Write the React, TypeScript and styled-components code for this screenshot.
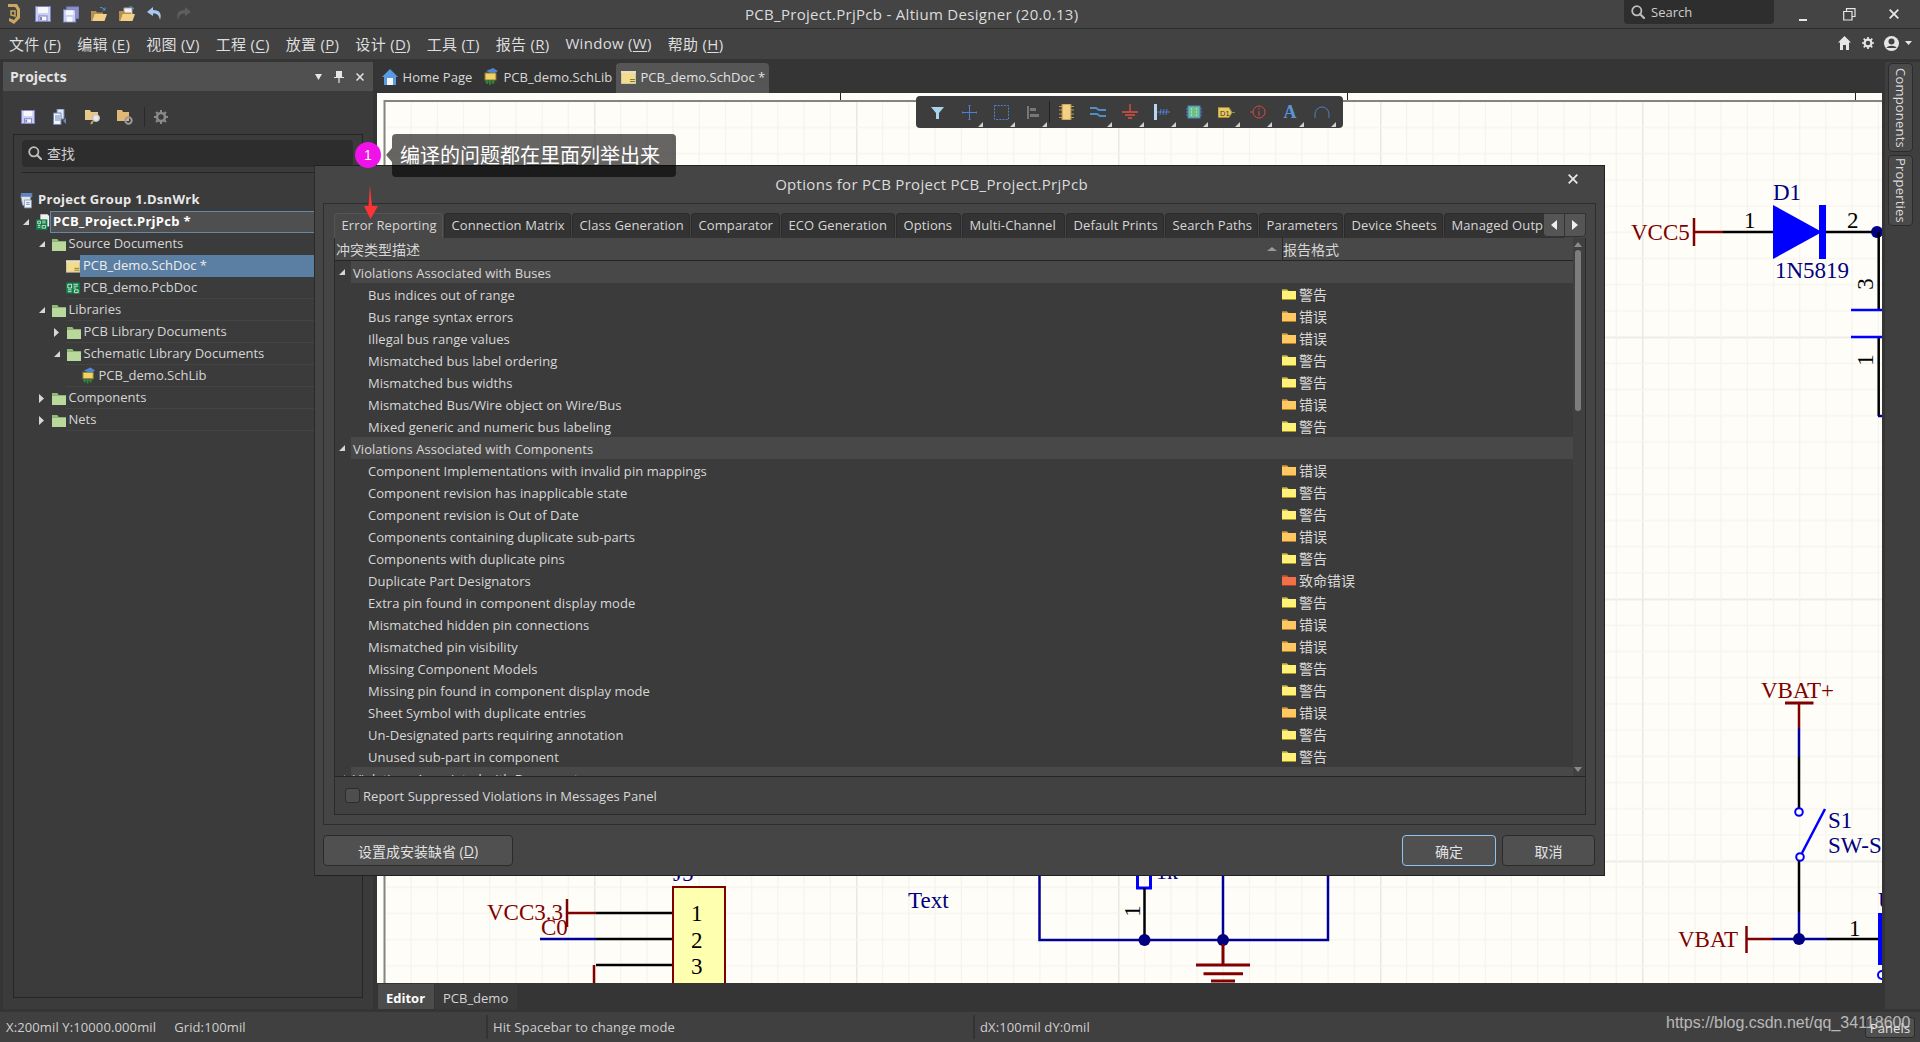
import React from "react";
import styled, { createGlobalStyle } from "styled-components";

const UI = `"Open Sans", "Noto Sans CJK SC", sans-serif`;

const GlobalStyle = createGlobalStyle`
  html, body { margin: 0; padding: 0; width: 1920px; height: 1042px; overflow: hidden; background: #353535; }
  body { font-family: ${UI}; font-size: 13px; color: #d9d9d9; }
  * { box-sizing: border-box; }
`;

const Page = styled.div`
  position: relative; width: 1920px; height: 1042px; display: flex; flex-direction: column; overflow: hidden; background: #353535;
`;
const TitleBar = styled.header`
  height: 29px; flex: none; display: flex; align-items: flex-start; background: #444; border-bottom: 1px solid #2d2d2d;
`;
const QuickBar = styled.div`
  width: 745px; height: 28px; flex: none; display: flex; align-items: center; padding-left: 7px; gap: 12px;
`;
const LogoSlot = styled.span`display: flex; width: 16px; height: 22px;`;
const AppTitle = styled.div`
  font-size: 15px; line-height: 28px; color: #dcdcdc; white-space: nowrap; letter-spacing: 0.3px;
`;
const TopSearch = styled.div`
  margin-left: auto; width: 150px; height: 24px; display: flex; align-items: center; gap: 6px; padding-left: 7px; background: #2e2e2e; border-radius: 0 0 4px 4px; font-size: 13px; color: #cfcfcf;
`;
const WinControls = styled.div`
  width: 146px; height: 28px; flex: none; display: flex; align-items: center; padding-left: 25px; gap: 30px;
`;
const MaxGlyph = styled.svg`margin-left: 6px;`;
const CloseGlyph = styled.span`display: flex; margin-left: 3px;`;
const MenuBar = styled.nav`
  height: 30px; flex: none; display: flex; align-items: center; padding: 0 8.5px 2px 9px; gap: 16px; background: #424242;
`;
const MenuItem = styled.span`
  font-size: 15px; color: #dedede; white-space: nowrap; letter-spacing: 0.3px;
  u { text-underline-offset: 2px; }
`;
const MenuTools = styled.div`margin-left: auto; display: flex; align-items: center; gap: 10.5px;`;
const Caret = styled.svg`margin-left: -5px;`;
const Main = styled.main`flex: 1; min-height: 0; display: flex; align-items: stretch;`;

const LeftPanel = styled.aside`
  width: 370px; margin: 3px 0 3px 3px; flex: none; display: flex; flex-direction: column; background: #3b3b3b;
`;
const PanelHead = styled.div`
  height: 29px; flex: none; display: flex; align-items: center; background: #505050; padding: 0 9px 0 7px;
`;
const PanelTitle = styled.b`font-size: 14px; color: #e4e4e4; font-weight: 700; flex: 1;`;
const PanelHeadTools = styled.div`display: flex; align-items: center; gap: 12px;`;
const PanelTools = styled.div`
  height: 43px; flex: none; display: flex; align-items: center; padding: 9px 0 0 18px;
`;
const ToolIcon = styled.span`display: flex; width: 32px; justify-content: flex-start;`;
const ToolSep = styled.span`width: 1px; height: 20px; background: #2a2a2a; margin: 0 9px 0 -5px;`;
const TreeBox = styled.div`
  flex: 1; margin: 0 10px 11px; border: 1px solid #252525; display: flex; flex-direction: column; position: relative;
`;
const FindBox = styled.div`
  height: 27px; margin: 5px 9px 5px 8px; flex: none; display: flex; align-items: center; gap: 5px; padding: 0 0 2px 6px; background: #2d2d2d; border-radius: 4px; font-size: 14px; color: #cfcfcf;
`;
const FindRule = styled.div`height: 1px; margin: 0 9px 16px 8px; background: #252525;`;
const TreeRow = styled.div<{ $icon: number; $line?: boolean }>`
  position: relative; height: 22px; flex: none; display: flex; align-items: center; padding-left: ${(p) => p.$icon - 14}px;
  ${(p) => p.$line && `&::after { content: ""; position: absolute; left: 52px; right: 0; bottom: 0; height: 1px; background: #444; }`}
`;
const ArrowSlot = styled.span`width: 10px; margin: 0 3px 0 -13px; flex: none; display: flex; align-items: center;`;
const IconSlot = styled.span`width: 14px; height: 16px; flex: none; display: flex; align-items: center;`;
const TreeLabel = styled.span<{ $kind?: "sel" | "focus" | "bold" }>`
  flex: 1; height: 22px; line-height: 21px; padding-left: 3px; white-space: nowrap; font-size: 13px; color: #d6d6d6;
  ${(p) => p.$kind === "sel" && `background: #5b7ea3; color: #eee;`}
  ${(p) => p.$kind === "bold" && `font-weight: 700; color: #e8e8e8; letter-spacing: 0.3px; padding-left: 4px;`}
  ${(p) => p.$kind === "focus" && `font-weight: 700; color: #fff; background: #4f4f4f; border: 1px solid #6388a8; border-right: 0; padding-left: 2px; line-height: 19px; letter-spacing: 0.3px;`}
`;

const Center = styled.section`width: 1505px; margin-left: 4px; flex: none; display: flex; flex-direction: column;`;
const DocTabs = styled.div`height: 34px; flex: none; display: flex; align-items: flex-end;`;
const DocTab = styled.div<{ $active?: boolean; $w: number }>`
  width: ${(p) => p.$w}px; height: 30px; flex: none; display: flex; align-items: center; gap: 4.5px; padding: 0 0 2px 5px; font-size: 13px; white-space: nowrap; color: #d8d8d8; letter-spacing: 0.05px;
  ${(p) => p.$active && `background: #555; border-radius: 4px 4px 0 0; color: #e2e2e2;`}
`;
const Canvas = styled.div`position: relative; flex: 1; min-height: 0; overflow: hidden; background: #fff;`;
const Sheet = styled.svg`display: block; width: 1505px; height: 891px;`;
const FloatBar = styled.div`
  position: absolute; left: 539px; top: 3px; width: 427px; height: 32px; display: flex; align-items: center; padding-left: 5px; background: #3d3d3d; border-radius: 4px;
`;
const FloatSlot = styled.span<{ $more?: boolean }>`
  position: relative; width: 32px; height: 32px; flex: none; display: flex; align-items: center; justify-content: center;
  ${(p) => p.$more && `&::after { content: ""; position: absolute; right: 2px; bottom: 1px; border-style: solid; border-width: 0 0 5px 5px; border-color: transparent transparent #cfcfcf transparent; }`}
`;
const FloatSep = styled.span`width: 1px; height: 22px; background: #222; flex: none; margin-left: 0;`;
const EditorTabs = styled.div`height: 25px; margin: 1px 0 3px; flex: none; display: flex;`;
const EditorTab = styled.div<{ $active?: boolean; $w: number }>`
  width: ${(p) => p.$w}px; margin-left: 1px; display: flex; align-items: center; padding: 2px 0 0 8px; font-size: 13px;
  background: ${(p) => (p.$active ? "#4c4c4c" : "#3a3a3a")}; color: ${(p) => (p.$active ? "#fff" : "#d4d4d4")}; font-weight: ${(p) => (p.$active ? 700 : 400)};
`;

const RightStrip = styled.aside`
  width: 35px; margin: 3px 0 3px 3px; flex: none; background: #3f3f3f; display: flex; flex-direction: column; gap: 3px; padding: 1px 0 0 3px;
`;
const SideTab = styled.div<{ $h: number }>`
  width: 25px; height: ${(p) => p.$h}px; writing-mode: vertical-rl; display: flex; align-items: center; justify-content: center; background: #4a4a4a; border: 1px solid #2c2c2c; border-radius: 4px; font-size: 13px; letter-spacing: 0.2px; color: #dcdcdc;
`;

const StatusBar = styled.footer`
  height: 30px; flex: none; display: flex; align-items: center; background: #404040; font-size: 13px; color: #cfcfcf; letter-spacing: 0.12px; position: relative;
`;
const StatusCell = styled.div<{ $w: number; $sep?: boolean }>`
  width: ${(p) => p.$w}px; height: 24px; flex: none; display: flex; align-items: center; padding-left: ${(p) => (p.$sep ? 5 : 6)}px; gap: 18px; white-space: nowrap;
  ${(p) => p.$sep && `border-left: 2px solid #333;`}
`;
const PanelsButton = styled.div`
  position: absolute; right: 5px; top: 5px; width: 50px; height: 21px; display: flex; align-items: center; justify-content: center; background: #505050; border: 1px solid #2c2c2c; border-radius: 3px; font-size: 13px; color: #e2e2e2;
`;
const Watermark = styled.div`
  position: absolute; left: 1666px; top: 1012px; font-family: "Liberation Sans", sans-serif; font-size: 16px; line-height: 22px; color: rgba(225,225,225,.75); white-space: nowrap; z-index: 5;
`;

/* dialog */
const Dialog = styled.div`
  position: absolute; left: 314px; top: 165px; width: 1291px; height: 711px; z-index: 2; display: flex; flex-direction: column; background: #454545; border: 1px solid #222; border-left-color: #2a2a2a;
`;
const DialogHead = styled.div`
  position: relative; height: 37px; flex: none; display: flex; align-items: center; justify-content: center; padding: 0 56px 2px 0; font-size: 15px; color: #dcdcdc; letter-spacing: 0.3px;
`;
const DialogClose = styled.span`position: absolute; right: 26px; top: 8px; display: flex;`;
const DialogBody = styled.div`
  height: 622px; margin: 0 8px 0 8px; flex: none; border: 1px solid #2e2e2e; padding: 9px 9px 9px 10px; display: flex; flex-direction: column;
`;
const TabRow = styled.div`position: relative; height: 25px; flex: none; display: flex; gap: 1px; overflow: hidden;`;
const Tab = styled.div<{ $active?: boolean; $w: number }>`
  width: ${(p) => p.$w}px; height: 25px; flex: none; display: flex; align-items: center; padding: 0 0 2px 6.5px; white-space: nowrap; overflow: hidden; border-radius: 4px 4px 0 0; font-size: 13px; color: #d6d6d6; letter-spacing: 0.1px;
  background: ${(p) => (p.$active ? "#484848" : "#333")};
  border: 1px solid ${(p) => (p.$active ? "#555" : "#2b2b2b")}; border-bottom: 0;
`;
const TabScroll = styled.div`
  position: absolute; right: 0; top: 0; width: 43px; height: 24px; display: flex; background: #555; border-radius: 0 0 4px 4px; border: 1px solid #333;
`;
const TabScrollBtn = styled.span<{ $rule?: boolean }>`
  flex: 1; display: flex; align-items: center; justify-content: center;
  ${(p) => p.$rule && `border-left: 1px solid #333;`}
`;
const TableBox = styled.div`
  flex: 1; min-height: 0; display: flex; flex-direction: column; border: 1px solid #2b2b2b; border-top: 0; background: #3b3b3b;
`;
const TableArea = styled.div`height: 539px; flex: none; display: flex; border-bottom: 1px solid #252525;`;
const TableMain = styled.div`width: 1238px; flex: none; display: flex; flex-direction: column; min-height: 0;`;
const HeadRow = styled.div`
  height: 23px; flex: none; display: grid; grid-template-columns: 947px 1fr; align-items: center; background: #484848; border-bottom: 1px solid #252525; font-size: 14px; color: #d6d6d6;
`;
const HeadCell = styled.div<{ $rule?: boolean }>`
  position: relative; height: 22px; line-height: 23px; padding-left: ${(p) => (p.$rule ? 0 : 1)}px;
  ${(p) => p.$rule && `border-left: 1px solid #2a2a2a;`}
`;
const SortMark = styled.span`
  position: absolute; right: 5px; top: 9px; border-style: solid; border-width: 0 5px 4px 5px; border-color: transparent transparent #9a9a9a transparent;
`;
const RowScroll = styled.div`flex: 1; min-height: 0; overflow: hidden;`;
const GroupRow = styled.div`height: 22px; display: flex; align-items: center; padding-left: 16px;`;
const GroupTri = styled.span`
  position: relative; left: -12px; width: 0; height: 0; border-style: solid; border-width: 0 0 6px 6px; border-color: transparent transparent #d5d5d5 transparent; margin-right: -6px;
`;
const GroupLabel = styled.div`
  flex: 1; height: 22px; line-height: 24px; padding-left: 2px; background: #484848; font-size: 13px; color: #d8d8d8; letter-spacing: 0.05px;
`;
const DataRow = styled.div`
  height: 22px; display: grid; grid-template-columns: 947px 1fr; align-items: center; font-size: 13px; color: #d8d8d8; letter-spacing: 0.05px;
`;
const NameCell = styled.div`padding: 1px 0 0 33px; white-space: nowrap;`;
const StatusTag = styled.div`display: flex; align-items: center; gap: 3px; font-size: 14px; letter-spacing: 0;`;
const ScrollCol = styled.div`
  flex: 1; position: relative; display: flex; flex-direction: column; align-items: center; padding: 4px 2px 0 0; background: #404040;
`;
const ScrollUp = styled.span`
  width: 0; height: 0; border-style: solid; border-width: 0 4px 5px 4px; border-color: transparent transparent #8a8a8a transparent;
`;
const ScrollThumb = styled.span`width: 6px; height: 161px; margin-top: 3px; background: #7d7d7d; border-radius: 3px;`;
const ScrollDown = styled.span`
  margin-top: auto; margin-bottom: 4px; width: 0; height: 0; border-style: solid; border-width: 5px 4px 0 4px; border-color: #8a8a8a transparent transparent transparent;
`;
const OptionRow = styled.div`flex: 1; display: flex; align-items: center; padding-left: 10px; gap: 3px; background: #414141; font-size: 13px; color: #d8d8d8; letter-spacing: 0.03px;`;
const Check = styled.span`width: 15px; height: 15px; background: #4e4e4e; border: 1px solid #2d2d2d; border-radius: 3px;`;
const DialogFoot = styled.div`flex: 1; display: flex; align-items: flex-start; padding: 10px 9px 0 8px; gap: 6px;`;
const Btn = styled.div<{ $w: number; $primary?: boolean; $push?: boolean }>`
  width: ${(p) => p.$w}px; height: 31px; display: flex; align-items: center; justify-content: center; background: #505050; border-radius: 4px; border: 1px solid ${(p) => (p.$primary ? "#8fc3f2" : "#2b2b2b")}; font-size: 14px; color: #e2e2e2;
  ${(p) => p.$push && `margin-left: auto;`}
`;

/* annotation */
const Badge = styled.div`
  position: absolute; left: 355px; top: 142px; width: 26px; height: 26px; border-radius: 50%; background: #f012e8; z-index: 4; display: flex; align-items: center; justify-content: center; font-family: "Liberation Sans", sans-serif; font-size: 14px; color: #fff;
`;
const Callout = styled.div`
  position: absolute; left: 392px; top: 134px; width: 284px; height: 43px; z-index: 3; padding-left: 8px; background: rgba(0,0,0,.6); border-radius: 4px; font-size: 20px; line-height: 42px; color: #fff; white-space: nowrap; font-family: "Noto Sans CJK SC", sans-serif;
  &::before { content: ""; position: absolute; left: -6px; top: 14px; border-style: solid; border-width: 7px 6px 7px 0; border-color: transparent rgba(0,0,0,.6) transparent transparent; }
`;
const RedArrow = styled.svg`position: absolute; left: 360px; top: 183px; width: 22px; height: 38px; z-index: 4;`;

/* ---------- icons ---------- */
const Folder = ({ c, d, w = 14 }: { c: string; d: string; w?: number }) => (
  <svg width={w} height={12} viewBox="0 0 14 12">
    <path d="M0 1.5 H5 L6.5 3 H14 V12 H0 Z" fill={c} />
    <path d="M0 11 H14 V12 H0 Z" fill={d} />
    <path d="M0 1.5 H5 L6.5 3 H0 Z" fill={d} opacity=".6" />
  </svg>
);
const TreeFolder = () => (
  <svg width={14} height={13} viewBox="0 0 14 13">
    <path d="M0 1 H5 L6.5 3 H14 V13 H0 Z" fill="#b9d99c" />
    <path d="M0 3 H14 V4 H0 Z" fill="#8cb274" />
    <path d="M0 1 H5 L6.5 3 H0 Z" fill="#93bb78" />
  </svg>
);
const SchIcon = () => (
  <svg width={15} height={13} viewBox="0 0 15 13">
    <rect x=".5" y=".5" width="14" height="12" fill="#f5dc8c" stroke="#c9c9b0" />
    <path d="M0 0 H15 V2 H0 Z" fill="#e6e0c8" />
    <path d="M9 8.5 H14 M9 10.5 H14" stroke="#8a7a30" />
  </svg>
);
const PcbIcon = ({ w = 15 }: { w?: number }) => (
  <svg width={w} height={14} viewBox="0 0 15 14">
    <rect x="0" y="1" width="15" height="12" fill="#0f7a48" />
    <path d="M2 3 H6 V7 H2 Z M8 3 H13 M8 5 H13 M8 7 H11 M2 9 H6 M2 11 H6 M9 9 H13 V12 H9 Z" stroke="#d8f0d8" strokeWidth="1" fill="none" />
  </svg>
);
const PrjIcon = () => (
  <svg width={16} height={18} viewBox="0 0 16 18">
    <path d="M5 0 H13 L15 2 V14 H5 Z" fill="#f0f0f0" />
    <rect x="0" y="6" width="13" height="12" fill="#0f7a48" />
    <path d="M2 8 H5 V11 H2 Z M7 8 H11 M7 10 H11 M2 13 H5 M2 15 H5 M7 13 H11 V16 H7 Z" stroke="#d8f0d8" fill="none" />
  </svg>
);
const GroupIcon = () => (
  <svg width={16} height={18} viewBox="0 0 16 18">
    <path d="M1 1 H14 V6 H1 Z" fill="#5f84c2" />
    <path d="M1 5 H12 V15 H3 Z" fill="#e6e6e6" stroke="#7f95b8" />
    <path d="M5 9 H13 V18 H5 Z" fill="#f5f5f5" stroke="#7f95b8" />
    <path d="M7 12 H11 M7 14 H11" stroke="#5f84c2" />
  </svg>
);
const LibIcon = () => (
  <svg width={15} height={18} viewBox="0 0 15 18">
    <path d="M2 3 L9 0 L14 3 L9 6 Z" fill="#4d86d6" />
    <rect x="1" y="5" width="11" height="7" fill="#f0d268" stroke="#8a7a30" />
    <path d="M3 12 V16 M6 12 V17 M9 12 V16" stroke="#2f8a3c" strokeWidth="1.5" />
    <path d="M1 14 H11" stroke="#2f8a3c" />
  </svg>
);
const Tri = ({ open }: { open?: boolean }) =>
  open ? (
    <svg width={6} height={6} viewBox="0 0 6 6"><path d="M6 0 V6 H0 Z" fill="#d8d8d8" /></svg>
  ) : (
    <svg width={5} height={9} viewBox="0 0 5 9"><path d="M0 0 L5 4.5 L0 9 Z" fill="#d8d8d8" /></svg>
  );
const Disk = ({ s = 16 }: { s?: number }) => (
  <svg width={s} height={s} viewBox="0 0 16 16">
    <rect x=".5" y=".5" width="15" height="15" fill="#c9d1f2" stroke="#7f80c4" />
    <rect x="3" y="1" width="10" height="6" fill="#f6f6fb" />
    <rect x="4" y="10" width="8" height="5" fill="#f6f6fb" stroke="#7f80c4" />
    <rect x="5" y="11" width="2" height="3" fill="#7f80c4" />
  </svg>
);
const DiskAll = () => (
  <svg width={16} height={17} viewBox="0 0 17 17">
    <rect x="4" y=".5" width="12.5" height="12" fill="#8f92c8" stroke="#7f80c4" />
    <rect x=".5" y="3.5" width="13" height="13" fill="#c9d1f2" stroke="#7f80c4" />
    <rect x="3" y="4" width="8" height="5" fill="#f6f6fb" />
    <rect x="4" y="11" width="6" height="5" fill="#f6f6fb" />
  </svg>
);
const OpenFolder = ({ doc }: { doc?: boolean }) => (
  <svg width={16} height={16} viewBox="0 0 16 16">
    {doc && <path d="M5 2 H13 V9 H5 Z" fill="#f2f2f2" stroke="#aaa" />}
    <path d="M0 5 H5 L6 6.5 H12 V8 H3.5 L1 15 H0 Z" fill="#b88f4f" />
    <path d="M3.5 8 H16 L13.5 15 H1 Z" fill="#f3cf88" />
    {!doc && <path d="M9 1.5 A5 5 0 0 1 14 4 M14 4 L11.5 4 M14 4 L14 1.5" stroke="#5a8fc8" fill="none" />}
    {doc && <path d="M10 1 A4 4 0 0 1 15 3" stroke="#5a8fc8" fill="none" />}
  </svg>
);
const Undo = ({ on }: { on?: boolean }) => (
  <svg width={16} height={14} viewBox="0 0 16 14">
    <path d={on ? "M6 0 L0 5 L6 9 V6.5 C10 6 12 8 13 13 C15 7 13 3 6 3 Z" : "M10 0 L16 5 L10 9 V6.5 C6 6 4 8 3 13 C1 7 3 3 10 3 Z"} fill={on ? "#a9c8f0" : "#5e5e5e"} />
  </svg>
);
const Logo = () => (
  <svg width={14} height={22} viewBox="0 0 14 22">
    <path d="M1 1 L10 1 L13 6 V15 L7 21 L2 18 V15 L7 17 L10 13 V7 L8 4 L1 4 Z" fill="#c8a860" />
    <path d="M4 8 L8 8 V13 L4 12 Z" fill="none" stroke="#c8a860" strokeWidth="1.5" />
  </svg>
);
const Search = ({ s = 13, c = "#bdbdbd" }: { s?: number; c?: string }) => (
  <svg width={s} height={s} viewBox="0 0 14 14">
    <circle cx="5.8" cy="5.8" r="4.6" fill="none" stroke={c} strokeWidth="1.8" />
    <path d="M9 9 L13 13" stroke={c} strokeWidth="2.2" strokeLinecap="round" />
  </svg>
);
const Gear = ({ c = "#8a8a8a", s = 14 }: { c?: string; s?: number }) => (
  <svg width={s} height={s} viewBox="0 0 14 14">
    <circle cx="7" cy="7" r="4" fill="none" stroke={c} strokeWidth="2.6" />
    <path d="M7 0 V2.5 M7 11.5 V14 M0 7 H2.5 M11.5 7 H14 M2 2 L3.8 3.8 M10.2 10.2 L12 12 M12 2 L10.2 3.8 M3.8 10.2 L2 12" stroke={c} strokeWidth="2" />
  </svg>
);
const Close = ({ s = 10, w = 1.8 }: { s?: number; w?: number }) => (
  <svg width={s} height={s} viewBox="0 0 10 10"><path d="M.7 .7 L9.3 9.3 M9.3 .7 L.7 9.3" stroke="#e6e6e6" strokeWidth={w} /></svg>
);
const Home = () => (
  <svg width={16} height={16} viewBox="0 0 16 16">
    <path d="M8 0 L16 8 L14 8 V16 H2 V8 H0 Z" fill="#5a9ae0" />
    <path d="M5 9 H11 V16 H5 Z" fill="#f4f4f4" />
  </svg>
);

const Flt = () => (<svg width="15" height="15" viewBox="0 0 15 15"><path d="M1 2 H14 L9 8 V14 H6 V8 Z" fill="#a9d4ee" /></svg>);
const Cross = () => (<svg width="15" height="15" viewBox="0 0 15 15"><path d="M7.5 0 V15 M0 7.5 H15" stroke="#4f7fd6" /><path d="M6 0 H9 M6 15 H9 M0 6 V9 M15 6 V9" stroke="#4f7fd6" /></svg>);
const Dash = () => (<svg width="15" height="15" viewBox="0 0 15 15"><rect x=".5" y=".5" width="14" height="14" fill="none" stroke="#4f7fd6" strokeDasharray="2 1.2" /></svg>);
const Align = () => (<svg width="13" height="13" viewBox="0 0 13 13"><path d="M0 0 H2 V13 H0 Z" fill="#777" /><path d="M3 2 H9 V5 H3 Z M3 8 H12 V11 H3 Z" fill="#777" /></svg>);
const Part = () => (<svg width="15" height="16" viewBox="0 0 15 16"><rect x="3" y="0" width="9" height="16" fill="#f5d080" stroke="#9a8a50" /><path d="M0 2.5 H3 M0 6 H3 M0 10 H3 M0 13.5 H3 M12 2.5 H15 M12 6 H15 M12 10 H15 M12 13.5 H15" stroke="#b89a50" /></svg>);
const Wires = () => (<svg width="16" height="12" viewBox="0 0 16 12"><path d="M0 2 H6 L9 4 H16 M0 8 H7 L10 10 H16" stroke="#4f8fc8" strokeWidth="2" fill="none" /></svg>);
const Gnd = () => (<svg width="16" height="16" viewBox="0 0 16 16"><path d="M8 0 V8 M0 8 H16 M3 11 H13 M6 14 H10" stroke="#e05040" strokeWidth="1.3" /></svg>);
const Bus = () => (<svg width="16" height="16" viewBox="0 0 16 16"><rect x="0" y="0" width="3" height="16" fill="#b9d4f5" /><path d="M3 8 H16 M7 5 L6 11 M10 5 L9 11 M13 5 L12 11" stroke="#4f7fd6" /></svg>);
const Sheetic = () => (<svg width="16" height="14" viewBox="0 0 16 14"><rect x="2" y="1" width="12" height="12" fill="#6cc08a" stroke="#4f7fd6" /><path d="M0 4 H2 M0 7 H2 M0 10 H2 M14 4 H16 M14 7 H16 M14 10 H16" stroke="#4f7fd6" /><path d="M5 4 H6 M5 7 H6 M5 10 H6 M10 4 H11 M10 7 H11 M10 10 H11" stroke="#e8f5e8" /></svg>);
const Port = () => (<svg width="17" height="11" viewBox="0 0 17 11"><path d="M0 .5 H11 L14 5.5 L11 10.5 H0 Z" fill="#e8c860" stroke="#a08a30" /><path d="M14 5.5 H17" stroke="#a08a30" /><text x="2" y="8.5" fontFamily="Liberation Sans" fontSize="7.5" fill="#333">D1</text></svg>);
const Info = () => (<svg width="16" height="14" viewBox="0 0 16 14"><circle cx="9" cy="7" r="6" fill="none" stroke="#d84a44" /><path d="M0 7 H3 M9 6 V11 M9 3 V4.5" stroke="#d84a44" /></svg>);
const ALetter = styled.span`font-family: "Liberation Serif", serif; font-weight: 700; font-size: 18px; color: #5b94d8; line-height: 1;`;
const Arc = () => (<svg width="16" height="12" viewBox="0 0 16 12"><path d="M1 12 V8 A7 7 0 0 1 15 8 V12" stroke="#4f7fc0" fill="none" /></svg>);

/* ---------- data ---------- */
const W = "警告", E = "错误", F = "致命错误";
const groups: { name: string; rows: [string, string][] }[] = [
  { name: "Violations Associated with Buses", rows: [
    ["Bus indices out of range", W], ["Bus range syntax errors", E], ["Illegal bus range values", E],
    ["Mismatched bus label ordering", W], ["Mismatched bus widths", W], ["Mismatched Bus/Wire object on Wire/Bus", E],
    ["Mixed generic and numeric bus labeling", W],
  ]},
  { name: "Violations Associated with Components", rows: [
    ["Component Implementations with invalid pin mappings", E], ["Component revision has inapplicable state", W],
    ["Component revision is Out of Date", W], ["Components containing duplicate sub-parts", E],
    ["Components with duplicate pins", W], ["Duplicate Part Designators", F], ["Extra pin found in component display mode", W],
    ["Mismatched hidden pin connections", E], ["Mismatched pin visibility", E], ["Missing Component Models", W],
    ["Missing pin found in component display mode", W], ["Sheet Symbol with duplicate entries", E],
    ["Un-Designated parts requiring annotation", W], ["Unused sub-part in component", W],
  ]},
  { name: "Violations Associated with Documents", rows: [] },
];
const tabs: [string, number][] = [
  ["Error Reporting", 109], ["Connection Matrix", 127], ["Class Generation", 118], ["Comparator", 89], ["ECO Generation", 114],
  ["Options", 65], ["Multi-Channel", 103], ["Default Prints", 98], ["Search Paths", 93], ["Parameters", 84], ["Device Sheets", 99], ["Managed Outputs", 120],
];
const menus: [string, string][] = [["文件", "F"], ["编辑", "E"], ["视图", "V"], ["工程", "C"], ["放置", "P"], ["设计", "D"], ["工具", "T"], ["报告", "R"], ["Window", "W"], ["帮助", "H"]];

const statusFolder = (s: string) =>
  s === W ? <Folder c="#fff07a" d="#a8961e" /> : s === E ? <Folder c="#ffc863" d="#b47f1e" /> : <Folder c="#f0704a" d="#a8401e" />;

type Node = { icon: number; tri?: "open" | "closed"; ic: React.ReactNode; text: string; kind?: "sel" | "focus" | "bold"; line?: boolean };
const tree: Node[] = [
  { icon: 20, ic: <GroupIcon />, text: "Project Group 1.DsnWrk", kind: "bold" },
  { icon: 36, tri: "open", ic: <PrjIcon />, text: "PCB_Project.PrjPcb *", kind: "focus" },
  { icon: 51.5, tri: "open", ic: <TreeFolder />, text: "Source Documents" },
  { icon: 66, ic: <SchIcon />, text: "PCB_demo.SchDoc *", kind: "sel" },
  { icon: 66, ic: <PcbIcon />, text: "PCB_demo.PcbDoc", line: true },
  { icon: 51.5, tri: "open", ic: <TreeFolder />, text: "Libraries", line: true },
  { icon: 66.5, tri: "closed", ic: <TreeFolder />, text: "PCB Library Documents", line: true },
  { icon: 66.5, tri: "open", ic: <TreeFolder />, text: "Schematic Library Documents", line: true },
  { icon: 81.5, ic: <LibIcon />, text: "PCB_demo.SchLib", line: true },
  { icon: 51.5, tri: "closed", ic: <TreeFolder />, text: "Components", line: true },
  { icon: 51.5, tri: "closed", ic: <TreeFolder />, text: "Nets", line: true },
];

const RED = "#800000", NAVY = "#000080", BLUE = "#0000ff", DBLUE = "#000099";
const SchText = ({ x, y, c = NAVY, s = 23, children }: { x: number; y: number; c?: string; s?: number; children: React.ReactNode }) => (
  <text x={x} y={y} fill={c} fontSize={s} fontFamily="'Liberation Serif', serif">{children}</text>
);
const PinNum = ({ x, y, children }: { x: number; y: number; children: React.ReactNode }) => (
  <text x={0} y={0} textAnchor="middle" dominantBaseline="central" fill="#000" fontSize={23} fontFamily="'Liberation Serif', serif" transform={`translate(${x} ${y}) rotate(-90)`}>{children}</text>
);
const L = ({ d, c = "#000", w = 2.5 }: { d: string; c?: string; w?: number }) => <path d={d} stroke={c} strokeWidth={w} fill="none" />;
const Dot = ({ x, y, r = 6 }: { x: number; y: number; r?: number }) => <circle cx={x} cy={y} r={r} fill={NAVY} />;

const Schematic = () => (
  <Sheet viewBox="377 93 1505 891">
    <defs>
      <pattern id="grid" patternUnits="userSpaceOnUse" x="856" y="336.6" width="262" height="262">
        <rect width="262" height="262" fill="#fffdf8" />
        {Array.from({ length: 10 }, (_, i) => (
          <React.Fragment key={i}>
            <path d={`M${i * 26.2 + 0.5} 0 V262`} stroke={i === 0 ? "#e9e8e3" : "#f5f4ef"} strokeWidth={i === 0 ? 2 : 1.2} />
            <path d={`M0 ${i * 26.2 + 0.5} H262`} stroke={i === 0 ? "#e9e8e3" : "#f5f4ef"} strokeWidth={i === 0 ? 2 : 1.2} />
          </React.Fragment>
        ))}
      </pattern>
    </defs>
    <rect x="377" y="93" width="1505" height="891" fill="#fffdf8" />
    <rect x="385" y="102" width="1497" height="882" fill="url(#grid)" />
    <path d="M384.5 984 V101 H1882" stroke="#848484" strokeWidth="2" fill="none" />
    <path d="M840.5 93 V100 M1347.5 93 V100 M1855.5 93 V100" stroke="#222" />

    <SchText x={1631} y={240} c={RED}>VCC5</SchText>
    <L d="M1694 218 V246" c={RED} />
    <L d="M1694 232 H1723" c={RED} />
    <L d="M1723 232 H1773 M1826 232 H1878" />
    <SchText x={1744} y={228} c="#000">1</SchText>
    <SchText x={1847} y={228} c="#000">2</SchText>
    <path d="M1773 205 L1822 232 L1773 259 Z" fill={BLUE} />
    <rect x="1819" y="205" width="7" height="54" fill={BLUE} />
    <SchText x={1773} y={200}>D1</SchText>
    <SchText x={1775} y={278}>1N5819</SchText>
    <Dot x={1877} y={232} />
    <L d="M1878.7 232 V310 M1878.7 337 V416" />
    <L d="M1851 310 H1882 M1851 337 H1882" c={BLUE} />
    <L d="M1878 416 H1882" c={DBLUE} />
    <PinNum x={1865} y={284}>3</PinNum>
    <PinNum x={1865} y={360}>1</PinNum>

    <SchText x={487} y={920} c={RED}>VCC3.3</SchText>
    <L d="M567 899 V927" c={RED} />
    <L d="M567 913 H596" c={RED} />
    <SchText x={541} y={935} c={RED}>C0</SchText>
    <L d="M540 939 H596" c={DBLUE} />
    <L d="M596 913 H673 M596 939 H673 M596 965 H673" />
    <L d="M594 965 V984" c={RED} />
    <rect x="673" y="887" width="52" height="110" fill="#ffffb0" stroke={RED} strokeWidth="2" />
    <SchText x={673} y={881}>J5</SchText>
    <SchText x={691} y={921} c="#000">1</SchText>
    <SchText x={691} y={948} c="#000">2</SchText>
    <SchText x={691} y={974} c="#000">3</SchText>
    <SchText x={908} y={908}>Text</SchText>

    <L d="M1039.5 860 V940 H1328 V860 M1223 860 V940" c={DBLUE} />
    <rect x="1137.5" y="860" width="13" height="28" fill="none" stroke={BLUE} strokeWidth="3" />
    <L d="M1144.5 888 V940" />
    <Dot x={1144.5} y={940} />
    <Dot x={1223} y={940} />
    <PinNum x={1132} y={911}>1</PinNum>
    <SchText x={1156} y={879} s={22}>1k</SchText>
    <L d="M1223 944 V965 M1196 965 H1250 M1203.5 973.7 H1243 M1211 981 H1235" c={RED} w={3} />

    <SchText x={1761} y={698} c={RED}>VBAT+</SchText>
    <L d="M1785 703 H1813.5" c={RED} w={3} />
    <L d="M1799 703 V728" c={RED} />
    <L d="M1799 728 V757" c={DBLUE} />
    <L d="M1799 757 V808" />
    <circle cx="1799" cy="812" r="3.8" fill="#fff" stroke={BLUE} strokeWidth="2" />
    <L d="M1802 853 L1825 809" c={BLUE} />
    <circle cx="1800" cy="857" r="3.8" fill="#fff" stroke={BLUE} strokeWidth="2" />
    <L d="M1799 861 V912" />
    <L d="M1799 912 V939" c={DBLUE} />
    <SchText x={1828} y={828}>S1</SchText>
    <SchText x={1828} y={853}>SW-SPST</SchText>
    <SchText x={1678} y={947} c={RED}>VBAT</SchText>
    <L d="M1746.5 926 V953" c={RED} />
    <L d="M1746.5 939 H1772" c={RED} />
    <L d="M1772 939 H1827" c={DBLUE} />
    <L d="M1827 939 H1878" />
    <SchText x={1849} y={936} c="#000">1</SchText>
    <Dot x={1799} y={939} />
    <rect x="1878" y="913" width="4" height="52" fill={BLUE} />
    <SchText x={1878} y={908}>U1</SchText>
    <circle cx="1882" cy="975" r="4" fill="#fff" stroke={BLUE} strokeWidth="2" />
  </Sheet>
);

export default function App() {
  return (
    <Page>
      <GlobalStyle />
      <TitleBar>
        <QuickBar>
          <LogoSlot><Logo /></LogoSlot>
          <Disk />
          <DiskAll />
          <OpenFolder />
          <OpenFolder doc />
          <Undo on />
          <Undo />
        </QuickBar>
        <AppTitle>PCB_Project.PrjPcb - Altium Designer (20.0.13)</AppTitle>
        <TopSearch><Search s={14} />Search</TopSearch>
        <WinControls>
          <svg width="8" height="20" viewBox="0 0 8 20"><path d="M0 16 H8" stroke="#e6e6e6" strokeWidth="2" /></svg>
          <MaxGlyph width="13" height="13" viewBox="0 0 13 13"><path d="M3.5 3 V.7 H12 V8.5 H9 M.7 3.5 H9 V12 H.7 Z" stroke="#e6e6e6" strokeWidth="1.2" fill="none" /></MaxGlyph>
          <CloseGlyph><Close s={10} w={1.8} /></CloseGlyph>
        </WinControls>
      </TitleBar>
      <MenuBar>
        {menus.map(([t, k]) => (
          <MenuItem key={k}>{t} (<u>{k}</u>)</MenuItem>
        ))}
        <MenuTools>
          <svg width="13" height="14" viewBox="0 0 13 14"><path d="M6.5 0 L13 6.5 H11 V14 H8 V9 H5 V14 H2 V6.5 H0 Z" fill="#e6e6e6" /></svg>
          <Gear c="#e6e6e6" s={12} />
          <svg width="15" height="15" viewBox="0 0 15 15"><circle cx="7.5" cy="7.5" r="7.5" fill="#e6e6e6" /><circle cx="7.5" cy="5.5" r="3" fill="#424242" /><path d="M2.5 12 C3.5 9 11.5 9 12.5 12 Z" fill="#424242" /></svg>
          <Caret width="7" height="4" viewBox="0 0 7 4"><path d="M0 0 H7 L3.5 4 Z" fill="#e6e6e6" /></Caret>
        </MenuTools>
      </MenuBar>
      <Main>
        <LeftPanel>
          <PanelHead>
            <PanelTitle>Projects</PanelTitle>
            <PanelHeadTools>
              <svg width="7" height="6" viewBox="0 0 7 6"><path d="M0 0 H7 L3.5 6 Z" fill="#e6e6e6" /></svg>
              <svg width="10" height="12" viewBox="0 0 10 12"><path d="M2 0 H8 V6 H10 V7 H5.6 V12 H4.4 V7 H0 V6 H2 Z" fill="#e6e6e6" /></svg>
              <Close s={8} />
            </PanelHeadTools>
          </PanelHead>
          <PanelTools>
            <ToolIcon><Disk s={14} /></ToolIcon>
            <ToolIcon>
              <svg width="14" height="16" viewBox="0 0 14 16"><path d="M4 0 H11 V10 H4 Z" fill="#dfe6f5" stroke="#6f86b8" /><path d="M.5 4 H8 V15.5 H.5 Z" fill="#f2f4fa" stroke="#6f86b8" /><path d="M2 7 H7 M2 9 H7 M2 11 H7" stroke="#6f86b8" /><path d="M10 12 L13 9 V15 Z" fill="#6f86b8" /></svg>
            </ToolIcon>
            <ToolIcon>
              <svg width="17" height="16" viewBox="0 0 17 16"><path d="M0 1 H5 L6 3 H13 V11 H0 Z" fill="#e8c88a" /><circle cx="11" cy="9" r="3.5" fill="#e8e8e8" stroke="#bbb" /><path d="M8 12 L6 15" stroke="#c8a860" strokeWidth="2" /></svg>
            </ToolIcon>
            <ToolIcon>
              <svg width="16" height="16" viewBox="0 0 16 16"><path d="M0 1 H5 L6 3 H12 V12 H0 Z" fill="#e0b878" /><circle cx="11.5" cy="11.5" r="3.2" fill="none" stroke="#9a9a9a" strokeWidth="2" /></svg>
            </ToolIcon>
            <ToolSep />
            <Gear />
          </PanelTools>
          <TreeBox>
            <FindBox><Search s={14} />查找</FindBox>
            <FindRule />
            {tree.map((n) => (
              <TreeRow key={n.text} $icon={n.icon} $line={n.line}>
                <ArrowSlot>{n.tri && <Tri open={n.tri === "open"} />}</ArrowSlot>
                <IconSlot>{n.ic}</IconSlot>
                <TreeLabel $kind={n.kind}>{n.text}</TreeLabel>
              </TreeRow>
            ))}
          </TreeBox>
        </LeftPanel>

        <Center>
          <DocTabs>
            <DocTab $w={102}><Home /> Home Page</DocTab>
            <DocTab $w={137}><LibIcon /> PCB_demo.SchLib</DocTab>
            <DocTab $active $w={153}><SchIcon /> PCB_demo.SchDoc *</DocTab>
          </DocTabs>
          <Canvas>
            <Schematic />
            <FloatBar>
              <FloatSlot><Flt /></FloatSlot>
              <FloatSlot $more><Cross /></FloatSlot>
              <FloatSlot $more><Dash /></FloatSlot>
              <FloatSlot $more><Align /></FloatSlot>
              <FloatSep />
              <FloatSlot><Part /></FloatSlot>
              <FloatSlot $more><Wires /></FloatSlot>
              <FloatSlot $more><Gnd /></FloatSlot>
              <FloatSlot $more><Bus /></FloatSlot>
              <FloatSlot $more><Sheetic /></FloatSlot>
              <FloatSlot $more><Port /></FloatSlot>
              <FloatSlot $more><Info /></FloatSlot>
              <FloatSlot $more><ALetter>A</ALetter></FloatSlot>
              <FloatSlot $more><Arc /></FloatSlot>
            </FloatBar>
          </Canvas>
          <EditorTabs>
            <EditorTab $active $w={56}>Editor</EditorTab>
            <EditorTab $w={82}>PCB_demo</EditorTab>
          </EditorTabs>
        </Center>

        <RightStrip>
          <SideTab $h={89}>Components</SideTab>
          <SideTab $h={71}>Properties</SideTab>
        </RightStrip>
      </Main>
      <StatusBar>
        <StatusCell $w={486}><span>X:200mil Y:10000.000mil</span><span>Grid:100mil</span></StatusCell>
        <StatusCell $w={487} $sep>Hit Spacebar to change mode</StatusCell>
        <StatusCell $w={300} $sep>dX:100mil dY:0mil</StatusCell>
        <PanelsButton>Panels</PanelsButton>
      </StatusBar>
      <Watermark>https://blog.csdn.net/qq_34118600</Watermark>

      <Dialog>
        <DialogHead>
          Options for PCB Project PCB_Project.PrjPcb
          <DialogClose><Close s={10} w={1.8} /></DialogClose>
        </DialogHead>
        <DialogBody>
          <TabRow>
            {tabs.map(([t, w], i) => (
              <Tab key={t} $w={w} $active={i === 0}>{t}</Tab>
            ))}
            <TabScroll>
              <TabScrollBtn><svg width="6" height="10" viewBox="0 0 6 10"><path d="M6 0 V10 L0 5 Z" fill="#f0f0f0" /></svg></TabScrollBtn>
              <TabScrollBtn $rule><svg width="6" height="10" viewBox="0 0 6 10"><path d="M0 0 V10 L6 5 Z" fill="#f0f0f0" /></svg></TabScrollBtn>
            </TabScroll>
          </TabRow>
          <TableBox>
            <TableArea>
              <TableMain>
                <HeadRow>
                  <HeadCell>冲突类型描述<SortMark /></HeadCell>
                  <HeadCell $rule>报告格式</HeadCell>
                </HeadRow>
                <RowScroll>
                  {groups.map((g) => (
                    <React.Fragment key={g.name}>
                      <GroupRow><GroupTri /><GroupLabel>{g.name}</GroupLabel></GroupRow>
                      {g.rows.map(([n, s]) => (
                        <DataRow key={n}>
                          <NameCell>{n}</NameCell>
                          <StatusTag>{statusFolder(s)}{s}</StatusTag>
                        </DataRow>
                      ))}
                    </React.Fragment>
                  ))}
                </RowScroll>
              </TableMain>
              <ScrollCol><ScrollUp /><ScrollThumb /><ScrollDown /></ScrollCol>
            </TableArea>
            <OptionRow><Check />Report Suppressed Violations in Messages Panel</OptionRow>
          </TableBox>
        </DialogBody>
        <DialogFoot>
          <Btn $w={190}>设置成安装缺省 (<u>D</u>)</Btn>
          <Btn $w={94} $primary $push>确定</Btn>
          <Btn $w={93}>取消</Btn>
        </DialogFoot>
      </Dialog>

      <Badge>1</Badge>
      <Callout>编译的问题都在里面列举出来</Callout>
      <RedArrow viewBox="360 183 22 38"><path d="M370 185 L372 206 H378 L370.5 219 L364 206 H368.5 Z" fill="#f33" /></RedArrow>
    </Page>
  );
}
